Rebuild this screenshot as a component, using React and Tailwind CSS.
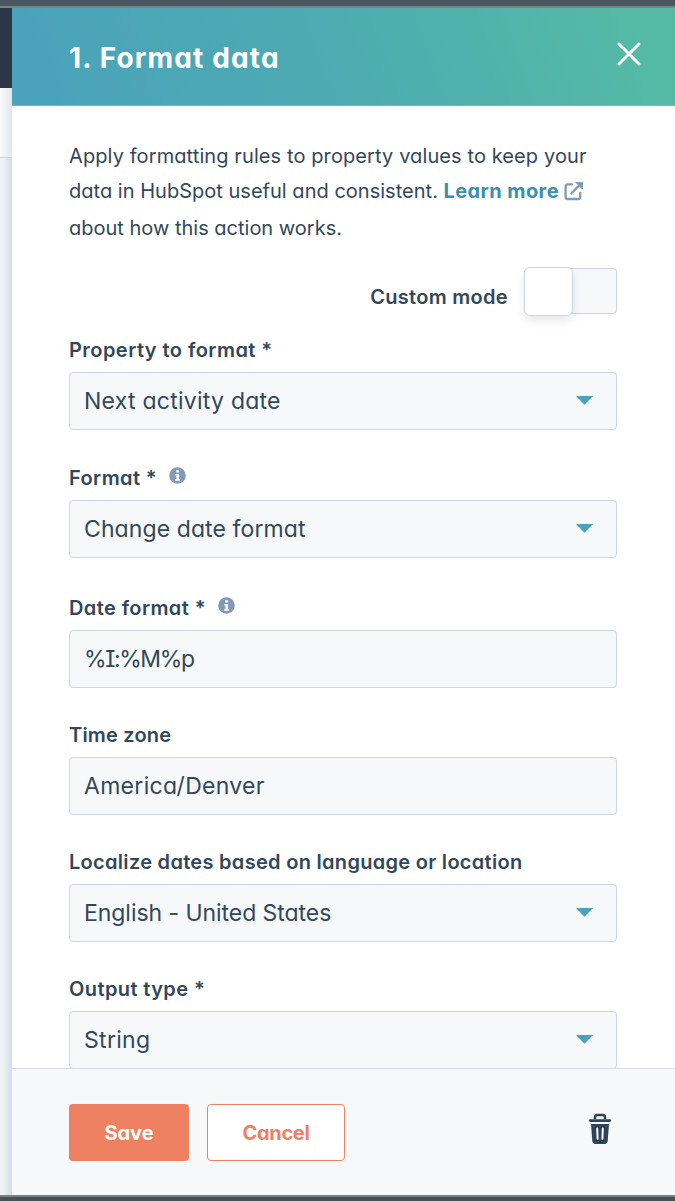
import { useState } from 'react'
import clsx from 'clsx'

const fields = [
  { label: 'Property to format *', value: 'Next activity date', select: true, gap: 'mt-0', tracking: 'tracking-[0.25px]', labelTracking: 'tracking-[0.45px]' },
  { label: 'Format *', value: 'Change date format', select: true, info: true, gap: 'mt-6', tracking: 'tracking-[0.1px]', labelTracking: 'tracking-[0.4px]' },
  { label: 'Date format *', value: '%I:%M%p', info: true, gap: 'mt-[26px]', tracking: 'tracking-[-1.4px]', labelTracking: 'tracking-[0.4px]' },
  { label: 'Time zone', value: 'America/Denver', gap: 'mt-[23px]', tracking: 'tracking-[0.3px]', labelTracking: 'tracking-[0.2px]' },
  { label: 'Localize dates based on language or location', value: 'English - United States', select: true, gap: 'mt-[23px]', tracking: 'tracking-[-0.05px]', labelTracking: 'tracking-[0.3px]' },
  { label: 'Output type *', value: 'String', select: true, gap: 'mt-[23px]', tracking: 'tracking-[0.3px]', labelTracking: 'tracking-[0.4px]' },
]

function InfoIcon() {
  return (
    <svg width="17" height="17" viewBox="0 0 17 17" className="relative -top-[2px]">
      <circle cx="8.5" cy="8.5" r="8.3" fill="#8299b8" />
      <path d="M7.2 3.2h2.9v2.4H7.2zM6.3 6.9h3.8v5.2h1v1.6H6.2v-1.6h1.2V8.5H6.3z" fill="#fff" />
    </svg>
  )
}

function ExternalIcon() {
  return (
    <svg width="20" height="20" viewBox="0 0 20 20" fill="none" stroke="#8299b8" strokeWidth="2.3" strokeLinecap="round" strokeLinejoin="round" className="ml-[5px] inline-block align-[-3px]">
      <path d="M8 3.4H3.6a2 2 0 0 0-2 2V16a2 2 0 0 0 2 2h10.6a2 2 0 0 0 2-2v-4" />
      <path d="M7.4 12.2 16 3.6" />
      <path d="M12 1.6h6.4V8L12 1.6Z" fill="#8299b8" strokeWidth="1" />
    </svg>
  )
}

function TrashIcon() {
  return (
    <svg width="24" height="32" viewBox="0 0 24 32" fill="none">
      <path d="M7 6V4.2A2.2 2.2 0 0 1 9.2 2h5.6A2.2 2.2 0 0 1 17 4.2V6" stroke="#2f4256" strokeWidth="2.6" />
      <path d="M2.2 7.6h19.6" stroke="#2f4256" strokeWidth="2.6" strokeLinecap="round" />
      <path d="M3 11h18l-1.3 17a3.4 3.4 0 0 1-3.4 3H7.7a3.4 3.4 0 0 1-3.4-3L3 11Z" fill="#2f4256" />
      <path d="M9.2 15.6l.4 10.4M14.8 15.6l-.4 10.4" stroke="#f6f8fa" strokeWidth="2" strokeLinecap="round" />
    </svg>
  )
}

function Field({ field }) {
  return (
    <div className={field.gap}>
      <div className="flex h-[46px] items-center gap-[12px]">
        <label className={clsx('pt-[1px] text-[20px] font-semibold whitespace-nowrap', field.labelTracking)}>{field.label}</label>
        {field.info && <InfoIcon />}
      </div>
      <div className="flex h-[58px] items-center justify-between rounded-[4px] border border-[#cbd6e4] bg-[#f6f8fa] pr-[23px] pl-[14px]">
        <span className={clsx('text-[23px] font-normal whitespace-nowrap', field.tracking)}>{field.value}</span>
        {field.select && (
          <svg width="17" height="9" viewBox="0 0 17 9" className="relative -top-px">
            <path d="M0 0h17L8.5 8.8Z" fill="#47a3ba" />
          </svg>
        )}
      </div>
    </div>
  )
}

export default function App() {
  const [customMode, setCustomMode] = useState(false)

  return (
    <div className="flex h-[1201px] w-[675px] flex-col overflow-hidden bg-white font-['Inter',sans-serif] text-[#33475b] [font-feature-settings:'cv11','cv08']">
      <div className="h-2 shrink-0 border-b-2 border-[#7b8389] bg-[#49565f]" />

      <div className="flex min-h-0 flex-1">
        {/* Strip of the page behind the panel */}
        <div className="flex w-[12px] shrink-0 flex-col">
          <div className="h-20 bg-[#2b3747]" />
          <div className="h-[70px] border-b border-[#cbd6e4] bg-linear-to-r from-[#fbfbfc] to-[#e3e5e9]" />
          <div className="flex-1 bg-linear-to-r from-[#eff3f6] from-20% to-[#d5dce5]" />
        </div>

        <div className="flex min-w-0 flex-1 flex-col">
          <header className="flex h-[98px] shrink-0 items-center justify-between border-b border-[#6bbfc4] bg-linear-[70deg,#4aa2bc_0%,#4daab2_45%,#55baa5_95%] pr-[34px] pl-[57px]">
            <h1 className="pt-[2px] text-[28px] font-bold tracking-[1.15px] whitespace-nowrap text-white">1. Format data</h1>
            <button aria-label="Close" className="relative -top-[3px]">
              <svg width="24" height="24" viewBox="0 0 24 24" stroke="#fff" strokeWidth="2.9" strokeLinecap="round">
                <path d="M2 2l20 20M22 2L2 22" />
              </svg>
            </button>
          </header>

          <main className="min-h-0 flex-1 overflow-hidden pr-[58px] pl-[57px]">
            <div className="pt-[33px] text-[20px] font-normal whitespace-nowrap">
              <p className="h-[35px] leading-[35px] tracking-[0.1px]">Apply formatting rules to property values to keep your</p>
              <p className="h-[36px] leading-[35px]">
                <span className="tracking-[0.02px]">data in HubSpot useful and consistent. </span>
                <a className="font-bold tracking-[0.4px] text-[#3b90ab]">Learn more</a>
                <ExternalIcon />
              </p>
              <p className="h-[36px] leading-[37px]">about how this action works.</p>
            </div>

            <div className="flex h-20 justify-end pt-[20px]">
              <span className="mr-4 pt-[17px] text-[20px] leading-[28px] font-semibold tracking-[0.3px]">Custom mode</span>
              <button
                role="switch"
                aria-checked={customMode}
                onClick={() => setCustomMode(!customMode)}
                className={clsx(
                  'mt-[2px] flex h-[46px] w-[93px] items-center rounded-[4px] border border-[#cbd6e4] bg-[#f6f8fa]',
                  customMode && 'justify-end'
                )}
              >
                <span className="-ml-px h-[49px] w-[49px] rounded-[6px] border border-[#cbd6e4] bg-white shadow-[0_5px_8px_rgba(51,71,91,0.12)]" />
              </button>
            </div>

            {fields.map((field) => (
              <Field key={field.label} field={field} />
            ))}
          </main>

          <footer className="flex h-[127px] shrink-0 items-center border-t border-[#d3dde8] bg-[#f6f8fa] pr-[63px] pl-[57px]">
            <button className="h-[57px] w-[120px] rounded-[4px] bg-[#ee8162] pt-[2px] text-[20px] font-bold text-white">Save</button>
            <button className="ml-[18px] h-[57px] w-[138px] rounded-[4px] border border-[#ee8162] bg-white pt-[2px] text-[20px] font-bold tracking-[-0.3px] text-[#ee8162]">
              Cancel
            </button>
            <button aria-label="Delete" className="relative -top-[3px] ml-auto">
              <TrashIcon />
            </button>
          </footer>
        </div>
      </div>

      <div className="h-[6px] shrink-0 border-t-2 border-[#75828a] bg-[#44525c]" />
    </div>
  )
}
